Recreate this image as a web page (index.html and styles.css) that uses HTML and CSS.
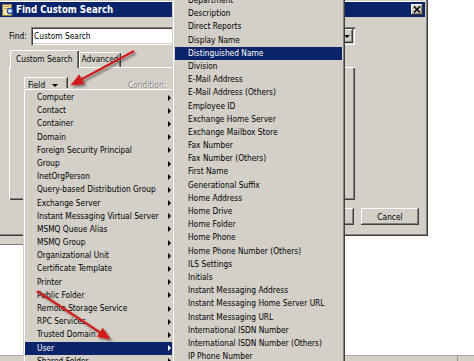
FILE: index.html
```html
<!DOCTYPE html>
<html lang="en">
<head>
	<meta charset="UTF-8">
	<title>Find Custom Search</title>
	<link rel="stylesheet" href="styles.css">
</head>
<body>
<div class="screen">
	<div class="dialog">
		<div class="titlebar">
			<svg class="appicon" width="12" height="13" viewBox="0 0 12 13">
				<rect x="0.5" y="1.5" width="9" height="11" fill="#f4e6a8" stroke="#8a7a3a"/>
				<rect x="2" y="3" width="6" height="1" fill="#b09a50"/>
				<rect x="2" y="5" width="5" height="1" fill="#b09a50"/>
				<circle cx="8" cy="8" r="2.6" fill="#cfe3ff" stroke="#2a4aa0" stroke-width="1.2"/>
				<line x1="9.8" y1="9.8" x2="11.6" y2="12" stroke="#2a4aa0" stroke-width="1.6"/>
			</svg>
			<span class="title">Find Custom Search</span>
			<span class="closebtn">
				<svg width="8" height="7" viewBox="0 0 8 7"><path d="M1 0.5 L7 6.5 M7 0.5 L1 6.5" stroke="#000" stroke-width="1.6"/></svg>
			</span>
		</div>
		<div class="findrow">
			<span class="findlabel">Find:</span>
			<div class="combo">
				<span>Custom Search</span>
				<span class="dropbtn"><i class="down"></i></span>
			</div>
		</div>
		<div class="tabs">
			<span class="tab active">Custom Search</span>
			<span class="tab">Advanced</span>
		</div>
		<div class="panel">
			<div class="fieldrow">
				<span class="btn fieldbtn">Field <i class="down"></i></span>
				<span class="cond">Condition:</span>
			</div>
		</div>
		<div class="btnrow">
			<span class="btn">OK</span>
			<span class="btn">Cancel</span>
		</div>
	</div>
	<div class="appstrip"></div>
	<div class="filler"></div>
	<div class="statusbar"><span class="sbmain"></span><span class="sbpart"></span></div>

	<ul class="menu mainmenu">
		<li>Computer<i class="sub"></i></li>
		<li>Contact<i class="sub"></i></li>
		<li>Container<i class="sub"></i></li>
		<li>Domain<i class="sub"></i></li>
		<li>Foreign Security Principal<i class="sub"></i></li>
		<li>Group<i class="sub"></i></li>
		<li>InetOrgPerson<i class="sub"></i></li>
		<li>Query-based Distribution Group<i class="sub"></i></li>
		<li>Exchange Server<i class="sub"></i></li>
		<li>Instant Messaging Virtual Server<i class="sub"></i></li>
		<li>MSMQ Queue Alias<i class="sub"></i></li>
		<li>MSMQ Group<i class="sub"></i></li>
		<li>Organizational Unit<i class="sub"></i></li>
		<li>Certificate Template<i class="sub"></i></li>
		<li>Printer<i class="sub"></i></li>
		<li>Public Folder<i class="sub"></i></li>
		<li>Remote Storage Service<i class="sub"></i></li>
		<li>RPC Services<i class="sub"></i></li>
		<li>Trusted Domain<i class="sub"></i></li>
		<li class="sel">User<i class="sub"></i></li>
		<li>Shared Folder<i class="sub"></i></li>
	</ul>

	<ul class="menu submenu">
		<li>Department</li>
		<li>Description</li>
		<li>Direct Reports</li>
		<li>Display Name</li>
		<li class="sel">Distinguished Name</li>
		<li>Division</li>
		<li>E-Mail Address</li>
		<li>E-Mail Address (Others)</li>
		<li>Employee ID</li>
		<li>Exchange Home Server</li>
		<li>Exchange Mailbox Store</li>
		<li>Fax Number</li>
		<li>Fax Number (Others)</li>
		<li>First Name</li>
		<li>Generational Suffix</li>
		<li>Home Address</li>
		<li>Home Drive</li>
		<li>Home Folder</li>
		<li>Home Phone</li>
		<li>Home Phone Number (Others)</li>
		<li>ILS Settings</li>
		<li>Initials</li>
		<li>Instant Messaging Address</li>
		<li>Instant Messaging Home Server URL</li>
		<li>Instant Messaging URL</li>
		<li>International ISDN Number</li>
		<li>International ISDN Number (Others)</li>
		<li>IP Phone Number</li>
	</ul>

	<svg class="arrows" width="474" height="361" viewBox="0 0 474 361">
		<defs>
			<filter id="shade" x="-20%" y="-20%" width="150%" height="150%">
				<feDropShadow dx="2" dy="2" stdDeviation="1.3" flood-color="#000" flood-opacity="0.45"/>
			</filter>
		</defs>
		<g filter="url(#shade)" fill="#d21d1d" stroke="#d21d1d">
			<line x1="134" y1="51" x2="81.6" y2="79.3" stroke-width="2.2"/>
			<polygon points="71,85 84,83.7 79.2,74.9" stroke-width="0.8"/>
			<line x1="37" y1="291" x2="100" y2="332.4" stroke-width="2.2"/>
			<polygon points="110,339 97.3,336.6 102.7,328.2" stroke-width="0.8"/>
		</g>
	</svg>
</div>
</body>
</html>
```

FILE: styles.css
```css
body{
	margin: 0;
	font-family: "DejaVu Sans Condensed", "Liberation Sans", sans-serif;
	font-size: 8.3px;
	color: #000;
}
ul{
	margin: 0;padding: 0;list-style: none;
}
.screen{
	width: 474px;height: 361px;position: relative;overflow: hidden;
	background: #fff;display: flex;flex-direction: column;
}

/* dialog */
.dialog{
	width: 428px;height: 236px;box-sizing: border-box;flex: none;
	background: #d4d0c8;padding: 2px 3px 0 0;
	box-shadow: inset -1px -1px #404040, inset -2px -2px #808080, inset 0 1px #d4d0c8, inset 0 2px #fff;
	display: flex;flex-direction: column;
}
.titlebar{
	height: 15px;background: #0a246a;color: #fff;
	display: flex;align-items: center;padding: 0 2px 0 2px;
}
.appicon{
	margin-right: 2px;flex: none;
}
.title{
	font-weight: bold;font-size: 9.6px;
}
.closebtn{
	margin-left: auto;width: 12px;height: 11px;background: #d4d0c8;
	display: flex;align-items: center;justify-content: center;
	box-shadow: inset -1px -1px #404040, inset 1px 1px #fff, inset -2px -2px #808080;
}
.findrow{
	display: flex;align-items: center;margin-top: 10px;padding-left: 9px;
}
.findlabel{
	width: 22px;
}
.combo{
	width: 324px;height: 18px;box-sizing: border-box;background: #fff;
	display: flex;align-items: center;padding-left: 3px;
	box-shadow: inset 1px 1px #808080, inset 2px 2px #404040, inset -1px -1px #fff, inset -2px -2px #d4d0c8;
}
.dropbtn{
	margin-left: auto;margin-right: 2px;width: 12px;height: 14px;background: #d4d0c8;
	display: flex;align-items: center;justify-content: center;
	box-shadow: inset -1px -1px #404040, inset 1px 1px #fff, inset -2px -2px #808080;
}
.down{
	display: block;width: 0;height: 0;
	border-top: 3px solid #000;border-left: 3px solid transparent;border-right: 3px solid transparent;
}
.tabs{
	display: flex;align-items: flex-end;height: 17px;margin-top: 5px;padding-left: 10px;
}
.tab{
	height: 15px;box-sizing: border-box;padding: 2px 3px 0 3px;background: #d4d0c8;
	box-shadow: inset 1px 1px #fff, inset -1px 0 #404040, inset -2px 0 #808080;
}
.tab.active{
	height: 18px;margin-bottom: -1px;padding: 4px 6px 0 6px;position: relative;z-index: 1;
}
.panel{
	width: 346px;height: 133px;box-sizing: border-box;margin-left: 9px;
	box-shadow: inset 1px 1px #fff, inset -1px -1px #404040, inset -2px -2px #808080;
}
.fieldrow{
	display: flex;align-items: center;padding: 10px 0 0 15px;
}
.btn{
	display: flex;align-items: center;justify-content: center;
	width: 58px;height: 17px;box-sizing: border-box;background: #d4d0c8;
	box-shadow: inset -1px -1px #404040, inset 1px 1px #fff, inset -2px -2px #808080;
}
.fieldbtn{
	width: 44px;height: 16px;justify-content: flex-start;padding-left: 4px;gap: 7px;
}
.cond{
	margin-left: 60px;color: #808080;text-shadow: 1px 1px #fff;
}
.btnrow{
	display: flex;justify-content: flex-end;gap: 7px;margin-top: 8px;padding-right: 6px;
}

/* backdrop app */
.appstrip{
	width: 200px;height: 8px;flex: none;background: #d4d0c8;border-bottom: 1px solid #808080;
}
.filler{
	flex: 1;
}
.statusbar{
	height: 5px;flex: none;background: #d4d0c8;border-top: 1px solid #a8a8a8;display: flex;
}
.sbmain{
	flex: 1;
}
.sbpart{
	width: 16px;border-left: 1px solid #909090;
}

/* menus */
.menu{
	position: absolute;box-sizing: border-box;background: #d4d0c8;padding: 3px 3px 3px 2px;
	box-shadow: inset 1px 1px #d4d0c8, inset 2px 2px #fff, inset -1px -1px #404040, inset -2px -2px #808080;
}
.menu li{
	height: 13.2px;line-height: 13.2px;white-space: nowrap;
	display: flex;align-items: center;
}
.mainmenu{
	left: 23px;top: 88px;width: 153px;
}
.mainmenu li{
	padding-left: 12px;
}
.submenu{
	left: 172px;top: -9px;width: 173px;padding-left: 3px;
}
.submenu li{
	padding-left: 13px;
}
.menu li.sel{
	background: #0a246a;color: #fff;
}
.sub{
	margin-left: auto;margin-right: 2px;width: 0;height: 0;
	border-left: 3px solid #000;border-top: 3px solid transparent;border-bottom: 3px solid transparent;
}
.sel .sub{
	border-left-color: #fff;
}
.arrows{
	position: absolute;left: 0;top: 0;pointer-events: none;
}
```
